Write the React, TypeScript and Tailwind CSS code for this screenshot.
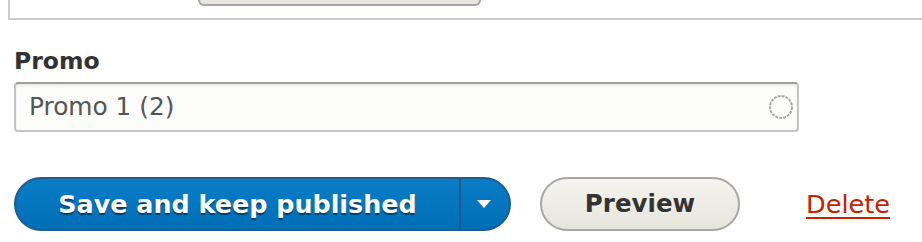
export default function App() {
  return (
    <div className="w-[922px] h-[242px] overflow-hidden bg-white font-['DejaVu_Sans',sans-serif] text-[#333]">
      {/* tail of the block above */}
      <div className="ml-[8px] h-[20px] w-[940px] border-l-2 border-b-2 border-[#cccccc]">
        <div className="ml-[188px] w-[283px] h-[6px] bg-[#e8e6df] border-2 border-t-0 border-[#a6a6a6] rounded-b-[6px]" />
      </div>

      <label className="block ml-[14px] mt-[27px] text-[23.5px] leading-[28px] font-bold text-[#333]">
        Promo
      </label>

      <div className="ml-[14px] mt-[7px] w-[785px] h-[50px] flex items-center justify-between border-2 border-[#c4c4c4] border-t-[#9e9e9e] rounded-[4px] bg-[#fcfcfa] shadow-[inset_0_2px_3px_rgba(0,0,0,0.08)] pl-[13px] pr-[2px]">
        <span className="text-[24.8px] text-[#555]">Promo 1 (2)</span>
        <svg width="28" height="28" viewBox="0 0 28 28">
          <circle cx="14" cy="14" r="11" fill="none" stroke="#a8a8a8" strokeWidth="2" strokeDasharray="3 1" />
        </svg>
      </div>

      <div className="ml-[14px] mt-[45px] flex items-center">
        <div className="w-[497px] h-[54px] flex rounded-full border-2 border-[#1e5c90] bg-gradient-to-b from-[#0a7dc7] to-[#006fb6] overflow-hidden">
          <button className="w-[443px] h-full flex items-center justify-center text-white font-bold text-[25.4px] [text-shadow:0_2px_1px_rgba(0,0,0,0.45)]">
            Save and keep published
          </button>
          <div className="w-[2px] h-full bg-[#1b5a8c]" />
          <button className="flex-1 h-full flex items-center justify-center pr-[2px]">
            <svg width="14" height="8" viewBox="0 0 14 8">
              <path d="M0 0H14L7 8Z" fill="#ffffff" />
            </svg>
          </button>
        </div>

        <button className="ml-[29px] w-[200px] h-[54px] rounded-full border-2 border-[#a6a6a6] bg-gradient-to-b from-[#f4f3ee] to-[#e7e6dc] text-[#333] font-bold text-[24.5px] [text-shadow:0_1px_0_rgba(255,255,255,0.6)]">
          Preview
        </button>

        <a href="#" className="ml-[66px] text-[25.6px] text-[#c72100] underline underline-offset-[4px] decoration-[2px]">
          Delete
        </a>
      </div>
    </div>
  );
}
